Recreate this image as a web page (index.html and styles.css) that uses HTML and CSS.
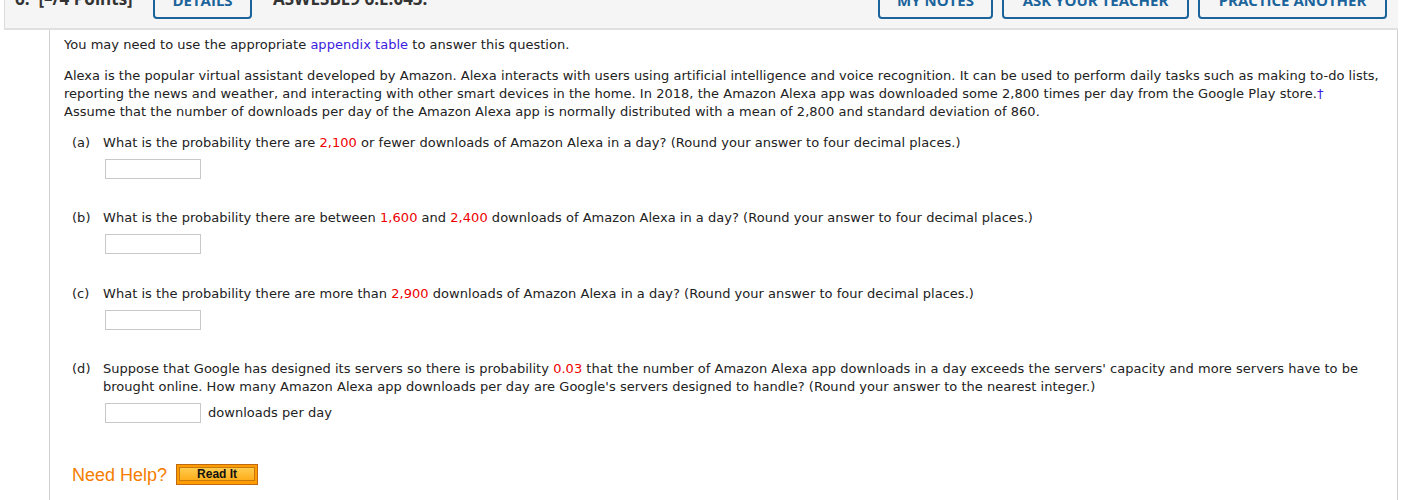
FILE: index.html
```html
<!DOCTYPE html>
<html>
<head>
<meta charset="utf-8">
<link rel="stylesheet" href="styles.css">
</head>
<body>
<div class="page">
  <div class="qhead">
    <div class="qnum">6.&nbsp;&nbsp;[&ndash;/4 Points]</div>
    <div class="btn details">DETAILS</div>
    <div class="qcode">ASWESBE9 6.E.043.</div>
    <div class="spacer"></div>
    <div class="btn notes">MY NOTES</div>
    <div class="btn ask">ASK YOUR TEACHER</div>
    <div class="btn practice">PRACTICE ANOTHER</div>
  </div>
  <div class="qbody">
    <p class="intro">You may need to use the appropriate <span class="link">appendix table</span> to answer this question.</p>
    <p class="para">Alexa is the popular virtual assistant developed by Amazon. Alexa interacts with users using artificial intelligence and voice recognition. It can be used to perform daily tasks such as making to-do lists, reporting the news and weather, and interacting with other smart devices in the home. In 2018, the Amazon Alexa app was downloaded some 2,800 times per day from the Google Play store.<span class="link">&dagger;</span><br>Assume that the number of downloads per day of the Amazon Alexa app is normally distributed with a mean of 2,800 and standard deviation of 860.</p>

    <div class="part">
      <div class="label">(a)</div>
      <div class="ptext">
        <div>What is the probability there are <span class="red">2,100</span> or fewer downloads of Amazon Alexa in a day? (Round your answer to four decimal places.)</div>
        <div class="ans"><span class="box"></span></div>
      </div>
    </div>
    <div class="part part-b">
      <div class="label">(b)</div>
      <div class="ptext">
        <div>What is the probability there are between <span class="red">1,600</span> and <span class="red">2,400</span> downloads of Amazon Alexa in a day? (Round your answer to four decimal places.)</div>
        <div class="ans"><span class="box"></span></div>
      </div>
    </div>
    <div class="part">
      <div class="label">(c)</div>
      <div class="ptext">
        <div>What is the probability there are more than <span class="red">2,900</span> downloads of Amazon Alexa in a day? (Round your answer to four decimal places.)</div>
        <div class="ans"><span class="box"></span></div>
      </div>
    </div>
    <div class="part">
      <div class="label">(d)</div>
      <div class="ptext">
        <div>Suppose that Google has designed its servers so there is probability <span class="red">0.03</span> that the number of Amazon Alexa app downloads in a day exceeds the servers' capacity and more servers have to be brought online. How many Amazon Alexa app downloads per day are Google's servers designed to handle? (Round your answer to the nearest integer.)</div>
        <div class="ans"><span class="box"></span><span class="unit">downloads per day</span></div>
      </div>
    </div>

    <div class="help">
      <span class="needhelp">Need Help?</span>
      <span class="readit"><span class="readit-in">Read It</span></span>
    </div>
  </div>
</div>
</body>
</html>
```
FILE: styles.css
```css
html, body {
  margin: 0;
  padding: 0;
  background: #fff;
  overflow: hidden;
}
.page {
  padding-left: 4px;
  width: 1394px;
}
.qhead {
  margin-top: -16px;
  height: 46px;
  box-sizing: border-box;
  background: #f5f5f5;
  border-left: 1px solid #dcdcdc;
  border-bottom: 2px solid #e0e0e0;
  display: flex;
  align-items: flex-start;
  font-family: "Open Sans", sans-serif;
  font-weight: 700;
}
.qnum {
  margin-left: 10px;
  margin-top: 3px;
  font-size: 17px;
  color: #333;
  width: 138px;
}
.qcode {
  margin-left: 21px;
  margin-top: 3px;
  font-size: 17px;
  color: #333;
}
.spacer { flex: 1; }
.btn {
  height: 35px;
  box-sizing: border-box;
  border: 2px solid #1b639b;
  border-radius: 4px;
  color: #1b639b;
  font-size: 15px;
  text-align: center;
  line-height: 28px;
}
.details { width: 99px; }
.notes { width: 115px; margin-right: 9px; }
.ask { width: 187px; margin-right: 9px; }
.practice { width: 189px; margin-right: 11px; }

.qbody {
  margin-left: 45px;
  border-left: 1px solid #d0d0d0;
  border-right: 1px solid #d0d0d0;
  padding: 6px 14px 14px 14px;
  font-family: "DejaVu Sans", Verdana, sans-serif;
  font-size: 13px;
  letter-spacing: 0.03px;
  line-height: 18px;
  color: #222;
  height: 480px;
}
.qbody p { margin: 0; }
.intro { margin-bottom: 13px !important; }
.para { margin-bottom: 13px !important; }
.link { color: #3b1de0; }
.red { color: #e00; }
.part {
  display: flex;
  padding-left: 8px;
  margin-bottom: 30px;
}
.part-b { margin-bottom: 31px; }
.label { width: 31px; flex: none; }
.ptext { flex: 1; }
.ans {
  margin-top: 7px;
  display: flex;
  align-items: center;
}
.box {
  display: inline-block;
  width: 96px;
  height: 20px;
  margin-left: 2px;
  box-sizing: border-box;
  border: 1px solid #c8c8c8;
}
.unit { margin-left: 7px; }
.help {
  margin-top: 41px;
  padding-left: 8px;
  display: flex;
  align-items: center;
}
.needhelp {
  font-family: "Liberation Sans", Arial, sans-serif;
  font-size: 18px;
  letter-spacing: 0;
  color: #f57d00;
  margin-right: 9px;
}
.readit {
  display: inline-block;
  height: 14px;
  border: 1px solid #bf6a12;
  background: #ff9c00;
  padding: 2px 2px 3px 2px;
}
.readit-in {
  display: block;
  width: 76px;
  height: 14px;
  box-sizing: border-box;
  border: 1px solid #c9780e;
  background: linear-gradient(#ffcc4d, #ffae1c);
  font-family: "Liberation Sans", Arial, sans-serif;
  font-weight: 700;
  font-size: 12px;
  letter-spacing: 0;
  line-height: 12px;
  text-align: center;
  color: #111;
}
```
